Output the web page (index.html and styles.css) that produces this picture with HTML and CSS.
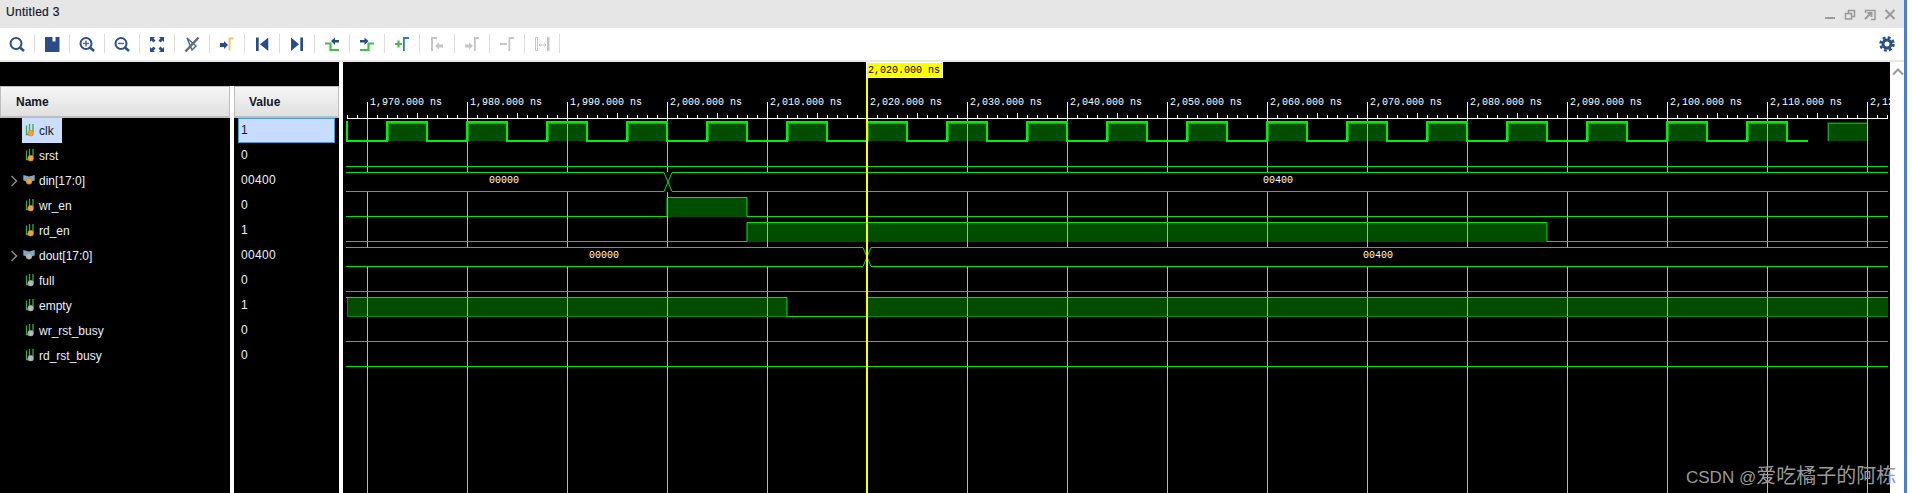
FILE: index.html
```html
<!DOCTYPE html>
<html lang="en">
<head>
<meta charset="utf-8">
<title>Untitled 3</title>
<link rel="stylesheet" href="styles.css">
</head>
<body>
<svg class="defs" width="0" height="0" aria-hidden="true">
  <symbol id="sig-in" viewBox="0 0 13 16" overflow="visible">
    <path class="sig-stem" d="M1.500 2.500v9h3M4.500 1v8M8 1v8"/>
    <circle class="sig-dot-in" cx="5.700" cy="10.200" r="2.900"/>
  </symbol>
  <symbol id="sig-out" viewBox="0 0 13 16" overflow="visible">
    <path class="sig-stem" d="M1.500 2.500v9h3M4.500 1v8M8 1v8"/>
    <circle class="sig-dot-out" cx="5.700" cy="10.200" r="2.900"/>
  </symbol>
  <symbol id="bus-in" viewBox="0 0 13 16" overflow="visible">
    <path class="bus-bow" d="M-1.700 2l5.700 1.500 5.700-1.500v5.500l-5.700 1.500-5.700-1.500z"/>
    <circle class="sig-dot-in" cx="4" cy="8.300" r="3"/>
  </symbol>
  <symbol id="bus-out" viewBox="0 0 13 16" overflow="visible">
    <path class="bus-bow" d="M-1.700 2l5.700 1.500 5.700-1.500v5.500l-5.700 1.500-5.700-1.500z"/>
    <circle class="sig-dot-out" cx="4" cy="8.300" r="3"/>
  </symbol>
</svg>

<div class="app">
  <header class="titlebar">
    <span class="title">Untitled 3</span>
    <div class="winctl">
      <svg class="ctl" viewBox="0 0 20 28"><path class="ctl-s" d="M5 18h10"/></svg>
      <svg class="ctl" viewBox="0 0 20 28"><path class="ctl-t" d="M5.500 13.500h6v5.500h-6zM8.500 13V10.500h6v6H12"/></svg>
      <svg class="ctl" viewBox="0 0 20 28"><path class="ctl-t" d="M5.500 13V10.500h9.500v9H11"/><path class="ctl-s" d="M5 19l6-6M7.500 13H11.500V17"/></svg>
      <svg class="ctl" viewBox="0 0 20 28"><path class="ctl-s" d="M5.500 10l9 9M14.500 10l-9 9"/></svg>
    </div>
  </header>

  <nav class="toolbar">
    <span class="tool"><svg class="ico" viewBox="0 0 35 19"><circle class="ln" cx="16" cy="9.500" r="5.500"/><path class="ln-h" d="M20 13.500l4 3.500"/></svg></span>
    <span class="tool"><svg class="ico" viewBox="0 0 35 19"><path class="nv" d="M10 3h14.500v15H10z"/><path class="wh" d="M17.500 3h3v4.500h-3z"/></svg></span>
    <span class="tool"><svg class="ico" viewBox="0 0 35 19"><circle class="ln" cx="16" cy="9.500" r="5.500"/><path class="ln-h" d="M20 13.500l4 3.500"/><path class="ln-t" d="M13 9.500h6M16 6.500v6"/></svg></span>
    <span class="tool"><svg class="ico" viewBox="0 0 35 19"><circle class="ln" cx="16" cy="9.500" r="5.500"/><path class="ln-h" d="M20 13.500l4 3.500"/><path class="ln-t" d="M13 9.500h6"/></svg></span>
    <span class="tool"><svg class="ico" viewBox="0 0 35 19"><path class="nv" d="M10 3h5l-1.500 1.500 2 2-2 2-2-2L10 8zM24 3h-5l1.500 1.500-2 2 2 2 2-2L24 8zM10 18h5l-1.500-1.500 2-2-2-2-2 2L10 13zM24 18h-5l1.500-1.500-2-2 2-2 2 2L24 13z"/></svg></span>
    <span class="tool"><svg class="ico" viewBox="0 0 35 19"><path class="ln-t" d="M12 4l9 8-4 4z"/><path class="slash" d="M10.500 17.500L23.500 3.500"/></svg></span>
    <span class="tool"><svg class="ico" viewBox="0 0 35 19"><path class="nv" d="M10 9h4V7l4 4-4 4v-2h-4z"/><path class="gold" d="M18.500 3.500H23.500V5.500H20.500V16.500H18.500z"/></svg></span>
    <span class="tool"><svg class="ico" viewBox="0 0 35 19"><path class="nv" d="M11 3.500h2.700v13.500H11zM23.300 3.500v13.500L15 10.200z"/></svg></span>
    <span class="tool"><svg class="ico" viewBox="0 0 35 19"><path class="nv" d="M11 3.500v13.500l8-6.800zM20.300 3.500h2.700v13.500h-2.700z"/></svg></span>
    <span class="tool"><svg class="ico" viewBox="0 0 35 19"><path class="grn" d="M10 9.500h5.500V16H24"/><path class="nv" d="M16 7l4-3.500V6h4v2.500h-4V11z"/></svg></span>
    <span class="tool"><svg class="ico" viewBox="0 0 35 19"><path class="grn" d="M10 16h8.500V9.500H24"/><path class="nv" d="M18.500 7l-4-3.500V6h-4.500v2.500h4.500V11z"/></svg></span>
    <span class="tool"><svg class="ico" viewBox="0 0 35 19"><path class="grn" d="M10 10h7M13.500 6.500v7"/><path class="blu" d="M18 3h6v2h-4.200v12H18z"/></svg></span>
    <span class="tool"><svg class="ico" viewBox="0 0 35 19"><path class="off" d="M11 3h6v2h-4v12h-2z"/><path class="off" d="M15 12l4-3.500V10.500h4v3h-4V15.500z"/></svg></span>
    <span class="tool"><svg class="ico" viewBox="0 0 35 19"><path class="off" d="M10 10.500h4V8.500l4 3.500-4 3.500v-2h-4z"/><path class="off" d="M19 3h5v2h-3.200v12H19z"/></svg></span>
    <span class="tool"><svg class="ico" viewBox="0 0 35 19"><path class="off" d="M10 9h7v2h-7zM18.500 3h5.500v2h-3.700v12h-1.800z"/></svg></span>
    <span class="tool"><svg class="ico" viewBox="0 0 35 19"><path class="off-t" d="M10.500 3.500h2v13h-2z"/><path class="off" d="M22 3h2.500v14H22z"/><path class="off-t" d="M14 11h7M15.500 9.500L14 11l1.500 1.500M19.500 9.500L21 11l-1.500 1.500"/></svg></span>
    <svg class="gear" viewBox="0 0 18 18"><circle class="gear-teeth" cx="9" cy="9" r="6.500"/><circle class="gear-ring" cx="9" cy="9" r="4"/></svg>
  </nav>
  <div class="rule"></div>

  <main class="panes">
    <section class="signals">
      <div class="signals-top"></div>
      <div class="cols">
        <div class="col col-name">
          <div class="col-head">Name</div>
          <div class="name-row"><span class="exp"></span><span class="name is-sel"><svg class="sig"><use href="#sig-in"/></svg>clk</span></div>
          <div class="name-row"><span class="exp"></span><span class="name"><svg class="sig"><use href="#sig-in"/></svg>srst</span></div>
          <div class="name-row"><span class="exp"><svg class="chev" viewBox="0 0 8 12"><path d="M1.500 1l5 5-5 5"/></svg></span><span class="name"><svg class="sig"><use href="#bus-in"/></svg>din[17:0]</span></div>
          <div class="name-row"><span class="exp"></span><span class="name"><svg class="sig"><use href="#sig-in"/></svg>wr_en</span></div>
          <div class="name-row"><span class="exp"></span><span class="name"><svg class="sig"><use href="#sig-in"/></svg>rd_en</span></div>
          <div class="name-row"><span class="exp"><svg class="chev" viewBox="0 0 8 12"><path d="M1.500 1l5 5-5 5"/></svg></span><span class="name"><svg class="sig"><use href="#bus-out"/></svg>dout[17:0]</span></div>
          <div class="name-row"><span class="exp"></span><span class="name"><svg class="sig"><use href="#sig-out"/></svg>full</span></div>
          <div class="name-row"><span class="exp"></span><span class="name"><svg class="sig"><use href="#sig-out"/></svg>empty</span></div>
          <div class="name-row"><span class="exp"></span><span class="name"><svg class="sig"><use href="#sig-out"/></svg>wr_rst_busy</span></div>
          <div class="name-row"><span class="exp"></span><span class="name"><svg class="sig"><use href="#sig-out"/></svg>rd_rst_busy</span></div>
        </div>
        <div class="col col-value">
          <div class="col-head col-head-value">Value</div>
          <div class="val is-sel">1</div>
          <div class="val">0</div>
          <div class="val">00400</div>
          <div class="val">0</div>
          <div class="val">1</div>
          <div class="val">00400</div>
          <div class="val">0</div>
          <div class="val">1</div>
          <div class="val">0</div>
          <div class="val">0</div>
        </div>
      </div>
    </section>

    <section class="wave">
      <svg class="wave-svg" viewBox="343 62 1547 431" width="1547" height="431">
        <defs>
          <pattern id="p-minor" x="347" y="115" width="10" height="3" patternUnits="userSpaceOnUse"><rect class="w" width="1" height="3"/></pattern>
          <pattern id="p-mid" x="417" y="113" width="100" height="5" patternUnits="userSpaceOnUse"><rect class="w" width="1" height="5"/></pattern>
          <pattern id="p-major" x="367" y="102" width="100" height="16" patternUnits="userSpaceOnUse"><rect class="w" width="1" height="16"/></pattern>
          <pattern id="p-grid" x="367" y="118" width="100" height="10" patternUnits="userSpaceOnUse"><rect class="g" width="1" height="10"/></pattern>
          <pattern id="p-clk" x="387" y="122" width="80" height="19" patternUnits="userSpaceOnUse">
            <rect class="fill" width="40" height="19"/>
            <rect class="edge" x="1" y="1" width="1" height="18"/>
            <rect class="edge" x="1" y="1" width="39" height="1"/>
          </pattern>
        </defs>

        <rect x="343" y="118" width="1545" height="375" fill="url(#p-grid)"/>
        <rect x="347" y="115" width="1541" height="3" fill="url(#p-minor)"/>
        <rect x="347" y="113" width="1541" height="5" fill="url(#p-mid)"/>
        <rect x="347" y="102" width="1541" height="16" fill="url(#p-major)"/>
        <path class="ruler" d="M347 118.500H1888"/>

        <g class="rlabel">
          <text x="370" y="105">1,970.000 ns</text>
          <text x="470" y="105">1,980.000 ns</text>
          <text x="570" y="105">1,990.000 ns</text>
          <text x="670" y="105">2,000.000 ns</text>
          <text x="770" y="105">2,010.000 ns</text>
          <text x="870" y="105">2,020.000 ns</text>
          <text x="970" y="105">2,030.000 ns</text>
          <text x="1070" y="105">2,040.000 ns</text>
          <text x="1170" y="105">2,050.000 ns</text>
          <text x="1270" y="105">2,060.000 ns</text>
          <text x="1370" y="105">2,070.000 ns</text>
          <text x="1470" y="105">2,080.000 ns</text>
          <text x="1570" y="105">2,090.000 ns</text>
          <text x="1670" y="105">2,100.000 ns</text>
          <text x="1770" y="105">2,110.000 ns</text>
          <text x="1870" y="105">2,12</text>
        </g>

        <!-- clk -->
        <rect x="387" y="122" width="1480" height="19" fill="url(#p-clk)"/>
        <path class="clk" d="M346 122h1V141H387V122h40v19h40v-19h40v19h40v-19h40v19h40v-19h40v19h40v-19h40v19h40v-19h40v19h40v-19h40v19h40v-19h40v19h40v-19h40v19h40v-19h40v19h40v-19h40v19h40v-19h40v19h40v-19h40v19h40v-19h40v19h40v-19h40v19h40v-19h40v19h40v-19h40v19h40v-19h40v19h21"/>

        <!-- srst, full, wr_rst_busy, rd_rst_busy -->
        <path class="sg" d="M346 166.500H1888M346 291.500H1888M346 341.500H1888M346 366.500H1888"/>

        <!-- din -->
        <rect class="mask" x="346" y="172" width="1542" height="20"/>
        <path class="sg" d="M346 172.500H664L672 191.500H1888M346 191.500H664L672 172.500H1888"/>
        <text class="bval" x="504" y="183">00000</text>
        <text class="bval" x="1278" y="183">00400</text>

        <!-- wr_en -->
        <rect class="fill" x="667" y="198" width="80" height="19"/>
        <path class="sg" d="M346 216.500H667V197.500H747V216.500H1888"/>

        <!-- rd_en -->
        <rect class="fill" x="747" y="223" width="800" height="19"/>
        <path class="sg" d="M346 241.500H747V222.500H1547V241.500H1888"/>

        <!-- dout -->
        <rect class="mask" x="346" y="247" width="1542" height="20"/>
        <path class="sg" d="M346 247.500H863L871 266.500H1888M346 266.500H863L871 247.500H1888"/>
        <text class="bval" x="604" y="258">00000</text>
        <text class="bval" x="1378" y="258">00400</text>

        <!-- empty -->
        <rect class="fill" x="347" y="298" width="440" height="19"/>
        <rect class="fill" x="867" y="298" width="1021" height="19"/>
        <path class="sg-dim" d="M347.500 298V316.500H787M867 316.500H1888"/>
        <path class="sg" d="M346 297.500H787V316.500H867V297.500H1888"/>

        <!-- cursor -->
        <rect class="cursor" x="866" y="62" width="2" height="431"/>
        <rect class="cur-box" x="866.500" y="62.500" width="76" height="15"/>
        <text class="cur-text" x="868" y="73">2,020.000 ns</text>
      </svg>
    </section>

    <aside class="scroll">
      <svg class="scroll-up" viewBox="0 0 12 8"><path d="M1 6.500l5-5 5 5"/></svg>
    </aside>
    <div class="watermark">CSDN @<span class="watermark-cjk">爱吃橘子的阿栋</span></div>
  </main>
</div>
</body>
</html>
```

FILE: styles.css
```css
* { box-sizing: border-box; }

html, body {
  margin: 0;
  height: 100%;
  background: #fff;
  overflow: hidden;
}

body {
  font-family: "Liberation Sans", Arial, sans-serif;
  font-size: 12px;
}

.defs { position: absolute; }

.app {
  width: 1907px;
  height: 493px;
  display: flex;
  flex-direction: column;
  border-right: 3px solid #4a7fcf;
}

/* title bar */
.titlebar {
  height: 28px;
  background: #e6e6e6;
  display: flex;
  justify-content: space-between;
  padding: 0 4px 0 6px;
}

.title {
  line-height: 24px;
  color: #12182a;
  letter-spacing: 0.3px;
  -webkit-text-stroke: 0.2px #12182a;
}

.winctl { display: flex; }
.ctl { width: 20px; height: 28px; }
.ctl-s, .ctl-t { fill: none; stroke: #9a9a9a; }
.ctl-s { stroke-width: 2; }
.ctl-t { stroke-width: 1.500; }

/* toolbar */
.toolbar {
  height: 32px;
  padding-top: 6px;
  display: flex;
  align-items: flex-start;
  background: #fff;
}

.tool {
  width: 35px;
  height: 19px;
  flex: none;
  border-right: 1px solid #dcdcdc;
}

.ico { display: block; width: 35px; height: 19px; overflow: visible; }
.ln { fill: none; stroke: #2f4f86; stroke-width: 2; }
.ln-h { fill: none; stroke: #2f4f86; stroke-width: 2.500; }
.ln-t { fill: none; stroke: #4f6c9c; stroke-width: 1.500; }
.nv { fill: #2c4c86; }
.wh { fill: #fff; }
.slash { fill: none; stroke: #6b6b6b; stroke-width: 2.500; }
.gold { fill: #e8cc70; }
.grn { fill: none; stroke: #43bf4a; stroke-width: 2.200; }
.blu { fill: #2f7db5; }
.off { fill: #c6c6c6; stroke: none; }
.off-t { fill: none; stroke: #c6c6c6; stroke-width: 1; }

.gear { width: 18px; height: 18px; margin: 1px 8px 0 auto; flex: none; }
.gear-teeth { fill: none; stroke: #2c4c86; stroke-width: 2.500; stroke-dasharray: 2.800 2.300; }
.gear-ring { fill: #fff; stroke: #2c4c86; stroke-width: 3; }

.rule { height: 2px; background: #e8e8e8; }

/* panes */
.panes {
  position: relative;
  height: 431px;
  display: flex;
  background: #fff;
}

.signals {
  width: 339px;
  flex: none;
  background: #000;
}

.signals-top { height: 24px; }

.cols { display: flex; }

.col-name { width: 230px; flex: none; }

.col-value {
  width: 109px;
  flex: none;
  border-left: 4px solid #fff;
  height: 407px;
}

.col-head {
  height: 32px;
  line-height: 30px;
  padding-left: 15px;
  font-weight: 700;
  color: #10162a;
  background: linear-gradient(#f6f6f6, #e0e0e0);
  border: 1px solid #bdbdbd;
  border-bottom-width: 2px;
}

.col-head-value { padding-left: 14px; }

.name-row {
  height: 25px;
  display: flex;
  align-items: stretch;
}

.exp {
  width: 22px;
  flex: none;
  display: flex;
  align-items: center;
  padding-left: 10px;
}

.chev { width: 8px; height: 12px; }
.chev path { fill: none; stroke: #8a8a8a; stroke-width: 1.500; }

.name {
  display: flex;
  align-items: center;
  padding-right: 8px;
  color: #eaf0ff;
}

.name.is-sel { background: #cadeff; color: #101828; }

.sig { width: 13px; height: 16px; margin: 0 1px 0 3px; flex: none; overflow: visible; }
.sig-stem { fill: none; stroke: #3aa64a; stroke-width: 1.300; }
.sig-dot-in { fill: #f0a040; stroke: #c47a20; stroke-width: .5; }
.sig-dot-out { fill: #b8b8b8; stroke: #8c8c8c; stroke-width: .5; }
.bus-bow { fill: #7fa8c8; }

.val {
  height: 25px;
  line-height: 25px;
  margin-left: 4px;
  width: 97px;
  padding-left: 3px;
  color: #eaf0ff;
  letter-spacing: 0.35px;
}

.val.is-sel {
  background: #c8dcff;
  border: 1px solid #4a9ad4;
  padding-left: 2px;
  line-height: 23px;
  color: #101828;
}

/* waveform */
.wave {
  margin-left: 4px;
  width: 1547px;
  flex: none;
  background: #000;
}

.wave-svg { display: block; }

.w { fill: #fff; }
.g { fill: #b8b8b8; }
.ruler { stroke: #fff; stroke-width: 1; fill: none; }

.rlabel text, .bval, .cur-text {
  font-family: "Liberation Mono", "DejaVu Sans Mono", monospace;
  font-size: 10px;
}

.rlabel text { fill: #fff; }
.bval { fill: #fff; text-anchor: middle; }

.fill { fill: #00ff00; fill-opacity: .3; }
.edge { fill: #1aa01a; }
.clk { fill: none; stroke: #00f000; stroke-width: 2; }
.sg { fill: none; stroke: #00e600; stroke-width: 1; }
.sg-dim { fill: none; stroke: #0a8a0a; stroke-width: 1; }
.mask { fill: #000; }

.cursor { fill: #ffff00; }
.cur-box { fill: #ffff00; stroke: #fff; stroke-width: 1; }
.cur-text { fill: #000; }

/* scroll strip */
.scroll {
  flex: none;
  width: 14px;
  background: #fff;
  padding-top: 6px;
}

.scroll-up { display: block; width: 12px; height: 8px; margin-left: 2px; }
.scroll-up path { fill: none; stroke: #9a9a9a; stroke-width: 2; }

.watermark {
  position: absolute;
  left: 1686px;
  top: 400px;
  font-family: "Liberation Sans", "Noto Sans CJK SC", sans-serif;
  font-size: 17px;
  line-height: 26px;
  white-space: nowrap;
  color: #9a9a9a;
}

.watermark-cjk {
  font-family: "Noto Sans CJK SC", sans-serif;
  font-size: 20px;
}
```
